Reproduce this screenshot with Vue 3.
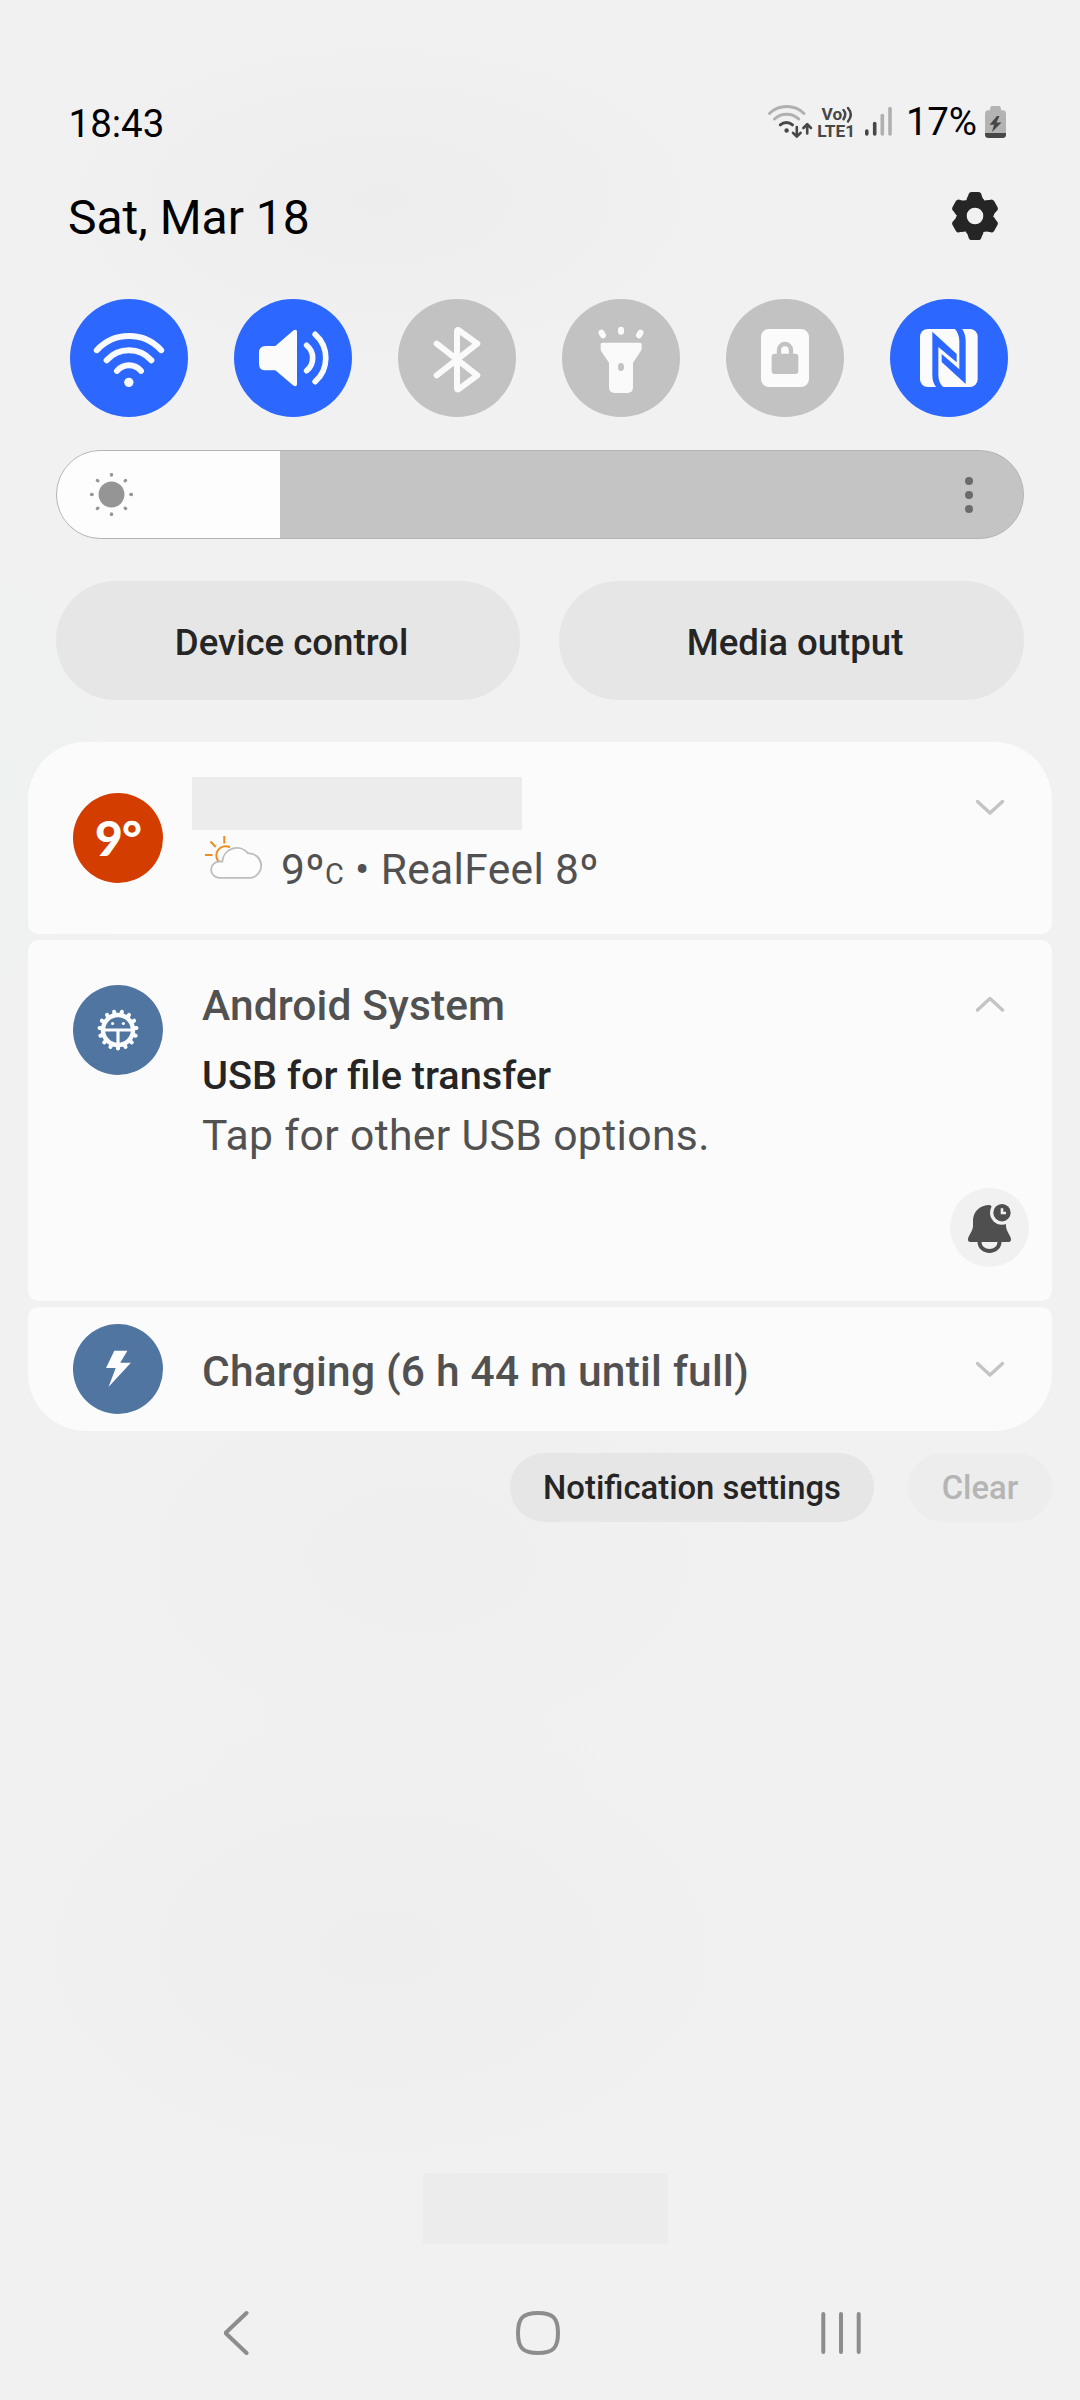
<script setup>
const tiles = [
  { id: 'wifi', on: true, box: '90 57 354 354' },
  { id: 'sound', on: true, box: '582 57 354 354' },
  { id: 'bluetooth', on: false, box: '54 57 354 354' },
  { id: 'torch', on: false, box: '546 57 354 354' },
  { id: 'lock', on: false, box: '78 57 354 354' },
  { id: 'nfc', on: true, box: '570 57 354 354' },
]

const rotate = (x, y, deg) => {
  const a = (deg * Math.PI) / 180
  const px = x * Math.cos(a) - y * Math.sin(a)
  const py = x * Math.sin(a) + y * Math.cos(a)
  return `${px.toFixed(2)} ${py.toFixed(2)}`
}

// Six-tooth gear outline, centred on 0,0
const gear = Array.from({ length: 6 }, (_, i) => {
  const d = i * 60
  return [
    `${i ? 'L' : 'M'}${rotate(-20, -62, d)}`,
    `Q${rotate(-18, -72, d)} ${rotate(-10, -72, d)}`,
    `L${rotate(10, -72, d)}`,
    `Q${rotate(18, -72, d)} ${rotate(20, -62, d)}`,
    `Q${rotate(22, -53, d)} ${rotate(26, -50, d)}`,
    `Q${rotate(30, -43, d)} ${rotate(31, -47.5, d)}`,
  ].join(' ')
}).join(' ') + 'Z'

const teeth = Array.from({ length: 15 }, (_, i) => i * 24 + 12)
const rays = Array.from({ length: 8 }, (_, i) => i * 45)
</script>

<template>
  <div class="screen">
    <header class="status">
      <span class="time">18:43</span>
      <div class="status-icons">
        <svg class="net" viewBox="765 100 130 40" width="130" height="40" fill="none" stroke-linecap="round">
          <g stroke="#b0b0b0" stroke-width="3">
            <path d="M769.5 113.5A25 25 0 0 1 804 113.5" />
            <path d="M774.5 119A17.5 17.5 0 0 1 798.7 119" />
          </g>
          <path d="M780.3 124.8A9.5 9.5 0 0 1 792.5 124.8" stroke="#474747" stroke-width="3" />
          <circle cx="786.6" cy="130.5" r="2.2" fill="#474747" />
          <g stroke="#474747" stroke-width="2.6" stroke-linejoin="round">
            <path d="M796.8 127V136.5M793 132.8L796.8 136.7L800.6 132.8" />
            <path d="M807.2 133.5V124.2M803.4 128L807.2 124.1L811 128" />
          </g>
          <text x="821.5" y="119.7" class="volte">Vo</text>
          <path d="M843.5 110Q847 114 843.5 119.3M848 108Q853.5 114.5 848 121.5" stroke="#474747" stroke-width="2.5" />
          <text x="817.3" y="136.8" class="volte">LTE1</text>
          <g stroke-width="3.6">
            <path d="M866.8 131V134" stroke="#474747" />
            <path d="M874.7 123.5V134" stroke="#474747" />
            <path d="M882.3 115.5V134" stroke="#b0b0b0" />
            <path d="M890 108.5V134" stroke="#b0b0b0" />
          </g>
        </svg>
        <span class="percent">17%</span>
        <svg class="battery" viewBox="985 106 21 32" width="21" height="32">
          <path d="M992 106H999Q1001 106 1001 110.3H1003Q1006 110.5 1006 114V133H985V114Q985 110.5 988 110.3H990Q990 106 992 106Z" fill="#b3b3b3" />
          <path d="M985 133H1006V134.5Q1006 138 1002.5 138H988.5Q985 138 985 134.5Z" fill="#474747" />
          <path d="M997 116L989.5 124.8H994L992 132L1001.5 122.5H996.5L999.5 116Z" fill="#474747" />
        </svg>
      </div>
    </header>

    <div class="date-row">
      <span class="date">Sat, Mar 18</span>
      <svg viewBox="-72 -72 144 144" width="48" height="48">
        <path :d="gear" fill="#252525" />
        <circle r="25" fill="#f1f1f1" />
      </svg>
    </div>

    <div class="tiles">
      <div v-for="t in tiles" :key="t.id" class="tile" :class="{ on: t.on }">
        <svg :viewBox="t.box" width="118" height="118" stroke-linecap="round" stroke-linejoin="round">
          <template v-if="t.id === 'wifi'">
            <g fill="none" stroke="#f7faff" stroke-width="18">
              <path d="M170.500 210.500A131 131 0 0 1 363.500 210.500" />
              <path d="M200 241A90 90 0 0 1 334 241" />
              <path d="M231 272.500A46.600 46.600 0 0 1 303 272.500" />
            </g>
            <circle cx="266.500" cy="307" r="14" fill="#f7faff" />
          </template>
          <template v-else-if="t.id === 'sound'">
            <path d="M677 198H706L759 152.500Q771 145 771 156V312Q771 323 759 315.500L706 271H677Q657 271 657 251V218Q657 198 677 198Z" fill="#fbfbfb" />
            <g fill="none" stroke="#f7faff" stroke-width="17">
              <path d="M800 196A49 49 0 0 1 800 272" />
              <path d="M825.500 163A95 95 0 0 1 825.500 305" />
            </g>
          </template>
          <path v-else-if="t.id === 'bluetooth'" d="M170 191L292 286L235 328Q231 329 231 325V153Q231 149 235 150L292 191L170 286" fill="none" stroke="#fafafa" stroke-width="18" />
          <template v-else-if="t.id === 'torch'">
            <path d="M667 188H780Q785 188 785 193V205Q785 210 782 214L759 248V322Q759 339 742 339H704Q687 339 687 322V248L665 216Q662 212 662 207V193Q662 188 667 188Z" fill="#fafafa" />
            <ellipse cx="723" cy="261" rx="9" ry="12" fill="#c2c2c2" />
            <path d="M723 149V155M664.500 158L669 166M781.500 158L777 166" stroke="#fafafa" stroke-width="18" />
          </template>
          <template v-else-if="t.id === 'lock'">
            <rect x="183" y="147" width="144" height="174" rx="24" fill="#fbfbfb" />
            <rect x="215" y="221" width="80" height="61" rx="9" fill="#c2c2c2" />
            <path d="M237 226V210A18 18 0 0 1 273 210V226" fill="none" stroke="#c2c2c2" stroke-width="13" />
          </template>
          <template v-else>
            <rect x="660" y="147" width="173" height="174" rx="23" fill="#fbfbfb" />
            <path d="M697 155L770 222V247L715 201V285Q715 308 730 322H709Q697 308 697 285Z" fill="#2c67ff" />
            <path d="M797 312L725 246V222L778 268V185Q778 160 764 146H786Q797 160 797 185Z" fill="#2c67ff" />
          </template>
        </svg>
      </div>
    </div>

    <div class="slider">
      <div class="slider-fill">
        <svg viewBox="-64 -64 128 128" width="43" height="43">
          <circle r="38.500" fill="#959595" />
          <ellipse v-for="r in rays" :key="r" cx="0" cy="-58.500" rx="5" ry="6" fill="#959595" :transform="`rotate(${r})`" />
        </svg>
      </div>
      <div class="more"><i /><i /><i /></div>
    </div>

    <div class="actions">
      <button class="action">Device control</button>
      <button class="action media">Media output</button>
    </div>

    <section class="cards">
      <article class="card weather">
        <div class="badge orange"><span>9°</span></div>
        <div class="body">
          <div class="blank title-blank" />
          <div class="forecast">
            <svg viewBox="201 834 62 46" width="62" height="46" fill="none" stroke-linecap="round">
              <g stroke="#ee8c22" stroke-width="2" stroke-linecap="butt">
                <path d="M217.500 861.500A9.300 9.300 0 0 1 229 847.300M223.300 836V843.500M209.500 841.500L214.700 847M204 855H211.500" />
              </g>
              <path d="M218.300 877.800A8.100 8.100 0 0 1 218.300 861.500H221.300A14.600 14.600 0 0 1 247.200 853.400A12.300 12.300 0 0 1 250 877.800Z" stroke="#bdbdbd" stroke-width="1.800" fill="#fdfdfd" />
            </svg>
            <span class="temp">9º<small>C</small> • RealFeel 8º</span>
          </div>
        </div>
        <svg class="chevron" viewBox="0 0 30 17" width="30" height="17"><path d="M2.500 2.500L15 14L27.500 2.500" /></svg>
      </article>

      <article class="card system">
        <div class="badge blue">
          <svg viewBox="-22 -22 44 44" width="44" height="44">
            <circle r="15" fill="none" stroke="#fafcff" stroke-width="4.400" />
            <path v-for="a in teeth" :key="a" d="M0 -16V-18.600" stroke="#fafcff" stroke-width="4" stroke-linecap="round" :transform="`rotate(${a})`" />
            <path d="M-14 0H14M0 0V14" stroke="#fafcff" stroke-width="3.200" fill="none" />
            <circle cx="-5.400" cy="-6.500" r="1.600" fill="#fafcff" />
            <circle cx="5.400" cy="-6.500" r="1.600" fill="#fafcff" />
          </svg>
        </div>
        <div class="body">
          <div class="app-name">Android System</div>
          <div class="headline">USB for file transfer</div>
          <div class="detail">Tap for other USB options.</div>
        </div>
        <div class="side">
          <svg class="chevron" viewBox="0 0 30 17" width="30" height="17"><path d="M2.500 14L15 2.500L27.500 14" /></svg>
          <div class="snooze">
            <svg viewBox="950 1188 79 79" width="79" height="79">
              <path d="M990 1205C979 1205 973 1212 973 1221V1226C973 1231 968 1236 968 1239.500Q968 1242 970.500 1242H1008.500Q1011 1242 1011 1239.500C1011 1236 1006 1231 1006 1226V1220Z" fill="#4f4f4f" />
              <path d="M979.500 1242A10 9 0 0 0 999.500 1242" fill="none" stroke="#4f4f4f" stroke-width="4" />
              <circle cx="1002" cy="1212.700" r="12" fill="#f1f1f1" />
              <circle cx="1002" cy="1212.700" r="8.700" fill="#4f4f4f" />
              <path d="M1002 1208.300V1213H1006" fill="none" stroke="#f1f1f1" stroke-width="2.600" />
            </svg>
          </div>
        </div>
      </article>

      <article class="card charging">
        <div class="badge blue">
          <svg viewBox="73 1324 90 90" width="90" height="90">
            <path d="M114.300 1350.700H127.400L120.200 1362.700H130.900L108.500 1387L115.700 1368H106Z" fill="#fafcff" />
          </svg>
        </div>
        <div class="body charge-text">Charging (6 h 44 m until full)</div>
        <svg class="chevron" viewBox="0 0 30 17" width="30" height="17"><path d="M2.500 2.500L15 14L27.500 2.500" /></svg>
      </article>
    </section>

    <div class="footer-actions">
      <button class="pill settings">Notification settings</button>
      <button class="pill clear">Clear</button>
    </div>

    <div class="spacer" />
    <div class="blank carrier" />

    <nav class="nav">
      <svg viewBox="224 2309 640 48" width="640" height="48" fill="none" stroke="#8d8d8d" stroke-width="4" stroke-linecap="round" stroke-linejoin="round">
        <path d="M246.500 2313L225.500 2333L246.500 2353" />
        <path d="M538 2313C553 2313 558 2318 558 2333S553 2353 538 2353S518 2348 518 2333S523 2313 538 2313Z" />
        <path d="M823.300 2314V2352M841 2314V2352M858.700 2314V2352" />
      </svg>
    </nav>
  </div>
</template>

<style>
body {
  margin: 0;
  background: #f1f1f1;
}
</style>

<style scoped>
.screen {
  width: 1080px;
  height: 2400px;
  display: flex;
  flex-direction: column;
  overflow: hidden;
  box-sizing: border-box;
  font-family: Roboto, "Liberation Sans", sans-serif;
  color: #000;
  background:
    radial-gradient(ellipse 360px 180px at 380px 200px, #ededed 0, rgba(237, 237, 237, 0) 100%),
    radial-gradient(ellipse 140px 300px at 0 780px, #eef2f0 0, rgba(238, 242, 240, 0) 100%),
    radial-gradient(ellipse 420px 260px at 380px 1950px, #eeeeee 0, rgba(238, 238, 238, 0) 100%),
    radial-gradient(ellipse 400px 260px at 420px 1560px, #efefef 0, rgba(239, 239, 239, 0) 100%),
    #f1f1f1;
}
svg {
  display: block;
  flex: none;
}
button {
  border: 0;
  font-family: inherit;
  padding: 0;
}
.status {
  display: flex;
  justify-content: space-between;
  height: 40px;
  margin: 102px 74px 0 68.5px;
}
.time {
  font-size: 38.5px;
  line-height: 43px;
}
.status-icons {
  display: flex;
}
.net {
  margin-top: -2px;
}
.volte {
  font-size: 17.3px;
  font-weight: 700;
  fill: #474747;
}
.percent {
  width: 74px;
  margin-left: 11px;
  font-size: 38.5px;
  line-height: 40px;
  letter-spacing: -0.3px;
}
.battery {
  margin: 4px 0 0 5px;
}
.date-row {
  display: flex;
  justify-content: space-between;
  align-items: center;
  height: 48px;
  margin: 50px 81px 0 68px;
}
.date {
  font-size: 48px;
  line-height: 52px;
  padding-top: 3px;
}
.tiles {
  display: flex;
  gap: 46px;
  margin: 59px 0 0 70px;
}
.tile {
  width: 118px;
  height: 118px;
  border-radius: 50%;
  background: #c2c2c2;
}
.tile.on {
  background: #2c67ff;
}
.slider {
  display: flex;
  justify-content: space-between;
  align-items: center;
  width: 968px;
  height: 89px;
  margin: 33px 0 0 56px;
  border: 1px solid #b4b4b4;
  border-radius: 45px;
  box-sizing: border-box;
  background: #c4c4c4;
  overflow: hidden;
}
.slider-fill {
  width: 223px;
  height: 100%;
  display: flex;
  align-items: center;
  padding-left: 33px;
  box-sizing: border-box;
  background: #fdfdfd;
}
.more {
  display: flex;
  flex-direction: column;
  gap: 6px;
  margin-right: 50.5px;
}
.more i {
  width: 8px;
  height: 8px;
  border-radius: 50%;
  background: #6b6b6b;
}
.actions {
  display: flex;
  justify-content: space-between;
  margin: 42px 56px 0;
}
.action {
  width: 464px;
  height: 119px;
  border-radius: 60px;
  background: #e6e6e6;
  color: #252525;
  font-size: 36.6px;
  font-weight: 500;
  padding: 4px 0 0 7px;
}
.media {
  width: 465px;
}
.cards {
  display: flex;
  flex-direction: column;
  gap: 6px;
  margin: 42px 28px 0;
}
.card {
  display: flex;
  align-items: flex-start;
  box-sizing: border-box;
  padding: 0 45px;
  border-radius: 11px;
  background: #fbfbfb;
}
.weather {
  height: 192px;
  border-radius: 58px 58px 11px 11px;
}
.system {
  height: 361px;
}
.charging {
  height: 124px;
  border-radius: 11px 11px 58px 58px;
}
.badge {
  flex: none;
  display: flex;
  align-items: center;
  justify-content: center;
  width: 90px;
  height: 90px;
  border-radius: 50%;
}
.orange {
  margin-top: 51px;
  background: #d43d00;
  color: #fff;
  font: 900 48px/56px Lato, Roboto, sans-serif;
  letter-spacing: -1px;
}
.blue {
  background: #5075a1;
}
.system .badge {
  margin-top: 45px;
}
.charging .badge {
  margin-top: 17px;
}
.body {
  flex: 1;
  margin-left: 39px;
}
.blank {
  background: #ececec;
}
.title-blank {
  width: 330px;
  height: 53px;
  margin: 35px 0 0 -10px;
}
.forecast {
  display: flex;
  margin-top: 4px;
}
.temp {
  margin-left: 17px;
  padding-top: 11px;
  font-size: 42.5px;
  line-height: 50px;
  letter-spacing: 0.35px;
  color: #515151;
  white-space: pre;
}
.temp small {
  font-size: 29px;
}
.chevron {
  fill: none;
  stroke: #c4c4c4;
  stroke-width: 3.4;
  stroke-linecap: round;
  stroke-linejoin: round;
}
.weather .chevron {
  margin: 57px 2px 0 0;
}
.charging .chevron {
  margin: 54px 2px 0 0;
}
.app-name {
  margin-top: 41px;
  font-size: 42.5px;
  line-height: 50px;
  font-weight: 500;
  letter-spacing: 0.1px;
  color: #515151;
}
.headline {
  margin-top: 20px;
  font-size: 39.7px;
  line-height: 50px;
  font-weight: 500;
  color: #252525;
}
.detail {
  margin-top: 9px;
  font-size: 42.7px;
  line-height: 50px;
  letter-spacing: 0.35px;
  color: #515151;
}
.side {
  display: flex;
  flex-direction: column;
  align-items: center;
  margin: 56px -22px 0 0;
}
.snooze {
  width: 79px;
  height: 79px;
  margin-top: 175px;
  border-radius: 50%;
  background: #f1f1f1;
}
.charge-text {
  margin-top: 40px;
  font-size: 42.5px;
  line-height: 50px;
  font-weight: 500;
  letter-spacing: 0.2px;
  color: #515151;
}
.footer-actions {
  display: flex;
  justify-content: flex-end;
  gap: 34px;
  margin: 22px 28px 0 0;
}
.pill {
  height: 69px;
  border-radius: 35px;
  background: #e6e6e6;
  color: #252525;
  font-size: 32.8px;
  font-weight: 500;
}
.settings {
  width: 364px;
}
.clear {
  width: 144px;
  background: #ededed;
  color: #b5b5b5;
}
.spacer {
  flex: 1;
}
.carrier {
  width: 245px;
  height: 71px;
  margin-left: 423px;
}
.nav {
  height: 156px;
  padding: 65px 0 0 224px;
  box-sizing: border-box;
}
</style>
